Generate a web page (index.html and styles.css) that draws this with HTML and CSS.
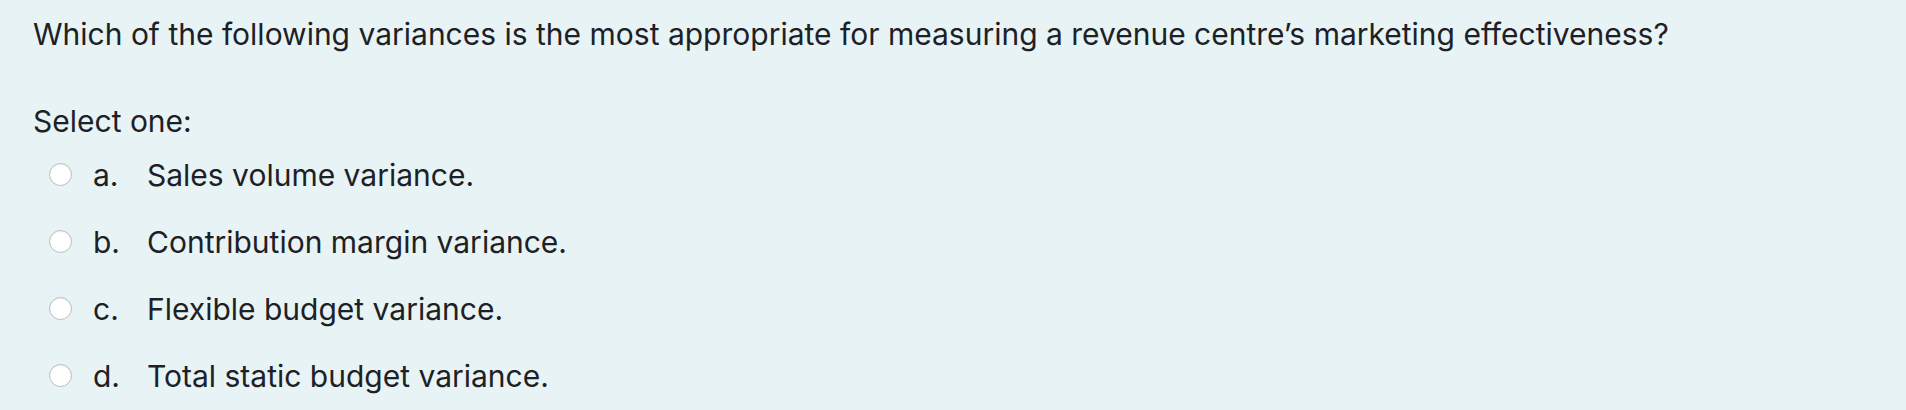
FILE: index.html
```html
<!DOCTYPE html>
<html lang="en">
<head>
<meta charset="utf-8">
<title>Question</title>
<link rel="stylesheet" href="styles.css">
</head>
<body>
<div class="formulation">
  <div class="qtext">Which of the following variances is the most appropriate for measuring a revenue centre’s marketing effectiveness?</div>
  <div class="ablock">
    <div class="prompt">Select one:</div>
    <div class="answer">
      <div class="option"><span class="radio"></span><span class="num">a.</span><span class="label">Sales volume variance.</span></div>
      <div class="option"><span class="radio"></span><span class="num">b.</span><span class="label">Contribution margin variance.</span></div>
      <div class="option"><span class="radio"></span><span class="num">c.</span><span class="label">Flexible budget variance.</span></div>
      <div class="option"><span class="radio"></span><span class="num">d.</span><span class="label">Total static budget variance.</span></div>
    </div>
  </div>
</div>
</body>
</html>
```
FILE: styles.css
```css
html, body {
  margin: 0;
  padding: 0;
  background: #e7f3f5;
}
body {
  font-family: Inter, "Noto Sans", sans-serif;
  color: #1d2125;
  font-size: 30px;
  line-height: 45px;
}
.formulation {
  padding: 12px 33px 0 33px;
  height: 410px;
  box-sizing: border-box;
  overflow: hidden;
}
.qtext {
  margin: 0 0 42px 0;
}
.prompt {
  margin: 0;
}
.answer {
  display: flex;
  flex-direction: column;
  padding-left: 16px;
  margin-top: -2px;
}
.option {
  display: flex;
  align-items: center;
  height: 67px;
}
.radio {
  width: 21px;
  height: 21px;
  border: 1px solid #b9bcbf;
  border-radius: 50%;
  background: #fff;
  box-shadow: inset 0 1px 1px rgba(0,0,0,0.06);
  flex: none;
  position: relative;
  top: -1px;
}
.num {
  margin-left: 21px;
  width: 54px;
  flex: none;
}
```
